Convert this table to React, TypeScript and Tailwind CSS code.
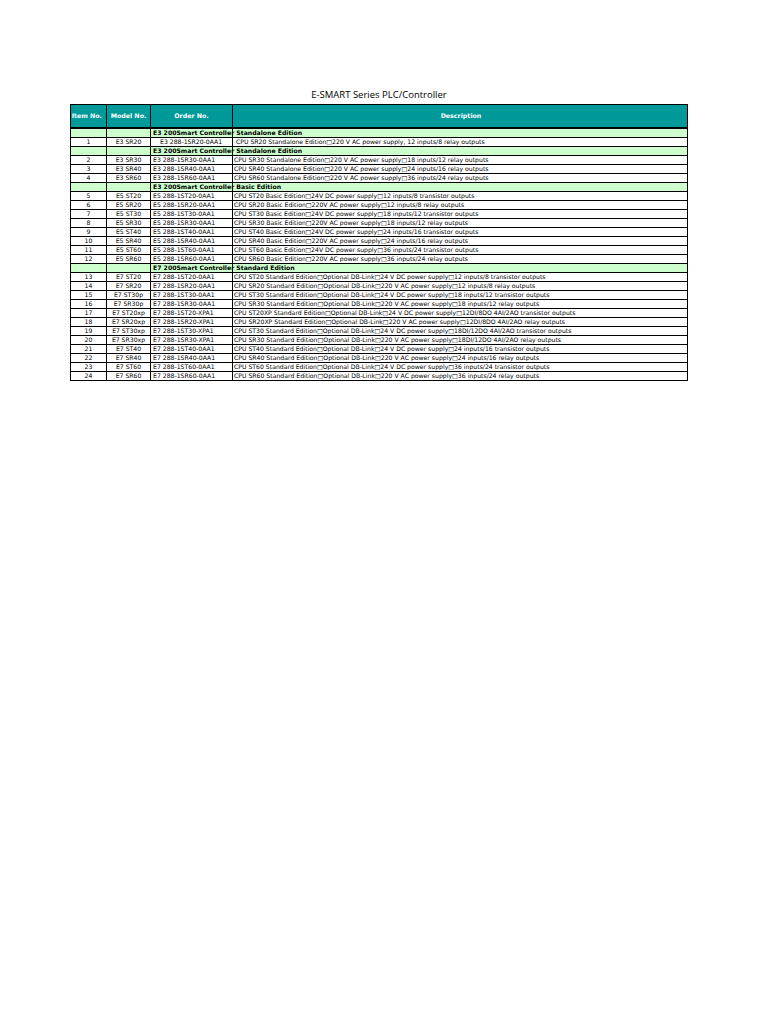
const SECTIONS_BEFORE: Record<number, string> = {
  1: "E3 200Smart Controller Standalone Edition",
  2: "E3 200Smart Controller Standalone Edition",
  5: "E3 200Smart Controller  Basic Edition",
  13: "E7 200Smart Controller Standard Edition",
};

const ROWS: [number, string, string, string][] = [
  [1, "E3 SR20", "E3 288-1SR20-0AA1", "CPU SR20 Standalone Edition□220 V AC power supply, 12 inputs/8 relay outputs"],
  [2, "E3 SR30", "E3 288-1SR30-0AA1", "CPU SR30 Standalone Edition□220 V AC power supply□18 inputs/12 relay outputs"],
  [3, "E3 SR40", "E3 288-1SR40-0AA1", "CPU SR40 Standalone Edition□220 V AC power supply□24 inputs/16 relay outputs"],
  [4, "E3 SR60", "E3 288-1SR60-0AA1", "CPU SR60 Standalone Edition□220 V AC power supply□36 inputs/24 relay outputs"],
  [5, "E5 ST20", "E5 288-1ST20-0AA1", "CPU ST20 Basic Edition□24V DC power supply□12 inputs/8 transistor outputs"],
  [6, "E5 SR20", "E5 288-1SR20-0AA1", "CPU SR20 Basic Edition□220V AC power supply□12 inputs/8 relay outputs"],
  [7, "E5 ST30", "E5 288-1ST30-0AA1", "CPU ST30 Basic Edition□24V DC power supply□18 inputs/12 transistor outputs"],
  [8, "E5 SR30", "E5 288-1SR30-0AA1", "CPU SR30 Basic Edition□220V AC power supply□18 inputs/12 relay outputs"],
  [9, "E5 ST40", "E5 288-1ST40-0AA1", "CPU ST40 Basic Edition□24V DC power supply□24 inputs/16 transistor outputs"],
  [10, "E5 SR40", "E5 288-1SR40-0AA1", "CPU SR40 Basic Edition□220V AC power supply□24 inputs/16 relay outputs"],
  [11, "E5 ST60", "E5 288-1ST60-0AA1", "CPU ST60 Basic Edition□24V DC power supply□36 inputs/24 transistor outputs"],
  [12, "E5 SR60", "E5 288-1SR60-0AA1", "CPU SR60 Basic Edition□220V AC power supply□36 inputs/24 relay outputs"],
  [13, "E7 ST20", "E7 288-1ST20-0AA1", "CPU ST20 Standard Edition□Optional DB-Link□24 V DC power supply□12 inputs/8 transistor outputs"],
  [14, "E7 SR20", "E7 288-1SR20-0AA1", "CPU SR20 Standard Edition□Optional DB-Link□220 V AC power supply□12 inputs/8 relay outputs"],
  [15, "E7 ST30p", "E7 288-1ST30-0AA1", "CPU ST30 Standard Edition□Optional DB-Link□24 V DC power supply□18 inputs/12 transistor outputs"],
  [16, "E7 SR30p", "E7 288-1SR30-0AA1", "CPU SR30 Standard Edition□Optional DB-Link□220 V AC power supply□18 inputs/12 relay outputs"],
  [17, "E7 ST20xp", "E7 288-1ST20-XPA1", "CPU ST20XP Standard Edition□Optional DB-Link□24 V DC power supply□12DI/8DO 4AI/2AO transistor outputs"],
  [18, "E7 SR20xp", "E7 288-1SR20-XPA1", "CPU SR20XP Standard Edition□Optional DB-Link□220 V AC power supply□12DI/8DO 4AI/2AO relay outputs"],
  [19, "E7 ST30xp", "E7 288-1ST30-XPA1", "CPU ST30 Standard Edition□Optional DB-Link□24 V DC power supply□18DI/12DO 4AI/2AO transistor outputs"],
  [20, "E7 SR30xp", "E7 288-1SR30-XPA1", "CPU SR30 Standard Edition□Optional DB-Link□220 V AC power supply□18DI/12DO 4AI/2AO relay outputs"],
  [21, "E7 ST40", "E7 288-1ST40-0AA1", "CPU ST40 Standard Edition□Optional DB-Link□24 V DC power supply□24 inputs/16 transistor outputs"],
  [22, "E7 SR40", "E7 288-1SR40-0AA1", "CPU SR40 Standard Edition□Optional DB-Link□220 V AC power supply□24 inputs/16 relay outputs"],
  [23, "E7 ST60", "E7 288-1ST60-0AA1", "CPU ST60 Standard Edition□Optional DB-Link□24 V DC power supply□36 inputs/24 transistor outputs"],
  [24, "E7 SR60", "E7 288-1SR60-0AA1", "CPU SR60 Standard Edition□Optional DB-Link□220 V AC power supply□36 inputs/24 relay outputs"],
];

const COLS = "grid grid-cols-[36px_44px_82px_456px]";

function SectionRow({ label }: { label: string }) {
  return (
    <div className={`${COLS} h-[9px] border-b border-black bg-[#ccffcc]`}>
      <div className="border-r border-black" />
      <div className="border-r border-black" />
      <div className="relative border-r border-black">
        <span className="absolute left-[2px] top-0 whitespace-nowrap text-[6.15px] font-bold leading-[8px]">
          {label}
        </span>
      </div>
      <div />
    </div>
  );
}

export default function App() {
  return (
    <div className="min-h-[1024px] w-[768px] bg-white pt-[88px] text-black [font-family:'DejaVu_Sans',Verdana,sans-serif]">
      <div className="ml-[70px] w-[618px]">
        <h1 className="mb-[3px] text-center text-[9.5px] font-normal leading-[13px] [font-family:'Open_Sans',sans-serif]">
          E-SMART Series PLC/Controller
        </h1>
        <div className="border-l border-r border-t border-black">
          <div className={`${COLS} h-[24px] border-b-2 border-black bg-[#009999] text-[6.3px] font-bold text-white`}>
            <div className="flex items-center justify-end overflow-hidden whitespace-nowrap border-r border-black pr-[4px]">
              <span className="shrink-0">Item No.</span>
            </div>
            <div className="flex items-center justify-center border-r border-black">Model No.</div>
            <div className="flex items-center justify-center border-r border-black">Order No.</div>
            <div className="flex items-center justify-center">Description</div>
          </div>
          {ROWS.map(([no, model, order, desc]) => (
            <div key={no}>
              {SECTIONS_BEFORE[no] && <SectionRow label={SECTIONS_BEFORE[no]} />}
              <div className={`${COLS} h-[9px] border-b border-black text-[6.15px] leading-[8px]`}>
                <div className="border-r border-black text-center">{no}</div>
                <div className="whitespace-nowrap border-r border-black text-center">{model}</div>
                <div className={`whitespace-nowrap border-r border-black ${no === 1 ? "pl-[9px]" : "pl-[2px]"}`}>
                  {order}
                </div>
                <div className={`whitespace-nowrap ${no === 1 ? "pl-[3px]" : "pl-[1px]"}`}>{desc}</div>
              </div>
            </div>
          ))}
        </div>
      </div>
    </div>
  );
}
